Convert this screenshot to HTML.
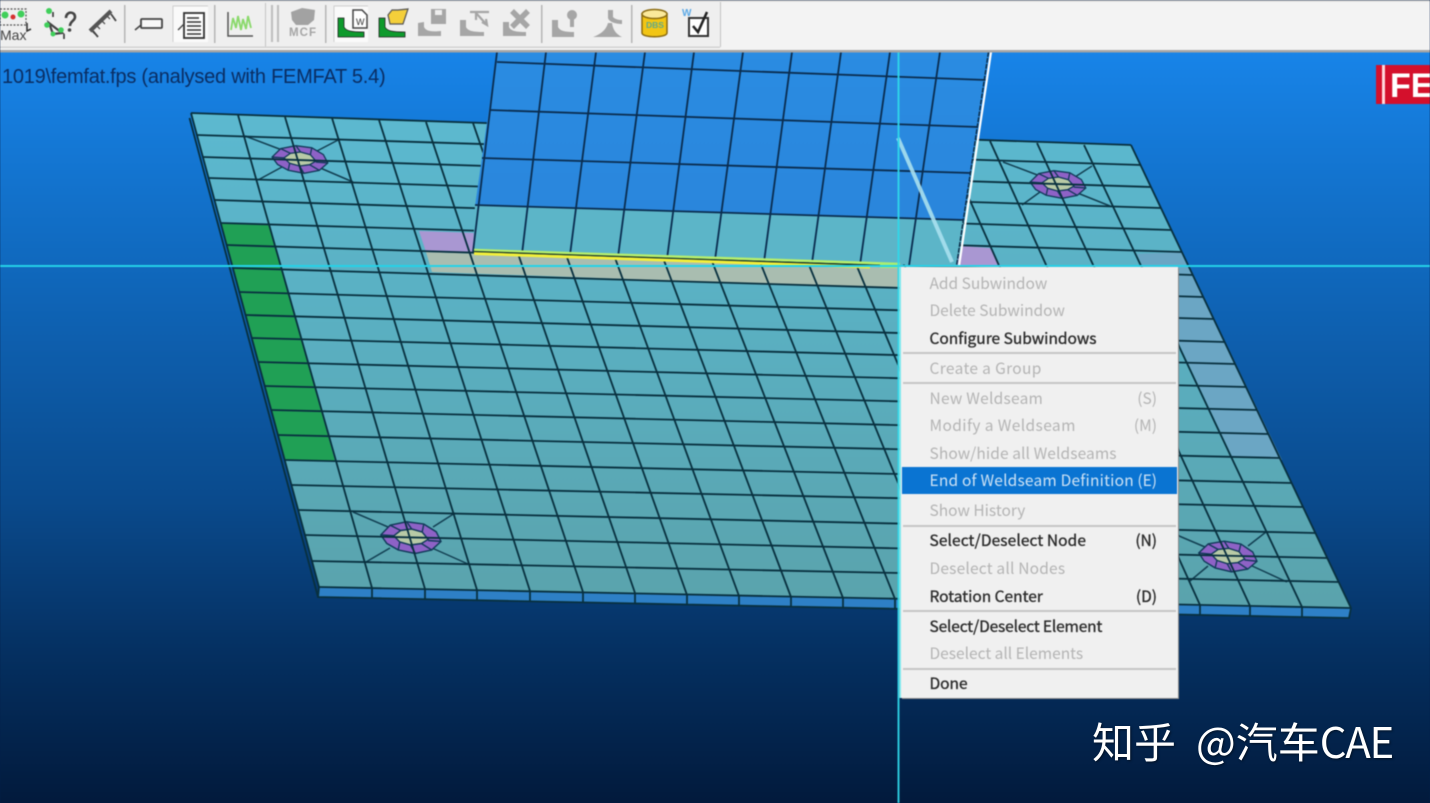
<!DOCTYPE html>
<html><head><meta charset="utf-8"><style>
html,body{margin:0;padding:0;width:1430px;height:803px;overflow:hidden;background:#03204a}
#s{position:absolute;left:0;top:0;filter:blur(.5px)}
.t{position:absolute;white-space:nowrap}
#title{left:2px;top:64px;font:20px/26px "Liberation Sans",sans-serif;color:#0a2d62;letter-spacing:-.25px;filter:blur(.4px)}
#menu{position:absolute;left:901px;top:267px;width:277px;height:431px;background:#f0f0f0;box-shadow:1px 1px 0 #8a8a8a,-2px 0 0 #7fe8ee;font:15.5px/20px "Noto Sans CJK SC","Liberation Sans",sans-serif;color:#b4b4b4;filter:blur(.4px)}
#menu .i{position:absolute;left:28.5px;white-space:nowrap}
#menu .k{position:absolute;right:21px;white-space:nowrap}
#menu .b{color:#2c2c2c;-webkit-text-stroke:.35px #2c2c2c}
#menu .hr{position:absolute;left:2px;right:2px;height:2px;background:#c6c6c6}
#hl{position:absolute;left:1px;right:1px;top:200px;height:27px;background:#0a74d2}
#menu .w{color:#cfe3f5}
.wm{position:absolute;font:42px/50px "Noto Sans CJK SC","Liberation Sans",sans-serif;color:#fff;white-space:nowrap;text-shadow:1px 1px 2px rgba(0,0,0,.5)}
</style></head><body>
<svg id="s" width="1430" height="803" viewBox="0 0 1430 803" xmlns="http://www.w3.org/2000/svg">
<defs>
<linearGradient id="bg" gradientUnits="userSpaceOnUse" x1="0" y1="52" x2="0" y2="803">
<stop offset="0" stop-color="#1884e8"/><stop offset=".28" stop-color="#1069be"/><stop offset=".6" stop-color="#0a4a8c"/><stop offset=".8" stop-color="#053061"/><stop offset="1" stop-color="#021a3c"/>
</linearGradient>
<linearGradient id="pl" gradientUnits="userSpaceOnUse" x1="0" y1="113" x2="0" y2="610">
<stop offset="0" stop-color="#5cb9d0"/><stop offset=".5" stop-color="#5aaebf"/><stop offset="1" stop-color="#5aa3ac"/>
</linearGradient>
<linearGradient id="pn" gradientUnits="userSpaceOnUse" x1="0" y1="52" x2="0" y2="222">
<stop offset="0" stop-color="#2a8ce2"/><stop offset="1" stop-color="#2a86dc"/>
</linearGradient>
<g id="bolt" stroke="#123a5a" stroke-width="1.3">
<polygon points="-28,0 -20,-9 -5,-13 11,-12 23,-6 28,2 20,10 5,14 -11,12 -22,7" fill="#8e62c6"/>
<polygon points="-16,0 -10,-5 0,-7 10,-5 16,1 10,5 0,7 -10,5" fill="#b8caa6"/>
<path d="M-28,0H-16M-20,-9L-10,-5M-5,-13L0,-7M11,-12L10,-5M28,2H16M20,10L10,5M5,14L0,7M-11,12L-10,5" fill="none"/>
</g>
</defs>
<rect width="1430" height="803" fill="url(#bg)"/>

<!-- plate -->
<polygon points="319,587 1351,608 1349,618 318,597" fill="#2e80c6"/>
<polygon points="191,113 1131,145 1351,608 319,587" fill="url(#pl)"/>
<polygon points="221,223 270,225 335,461 285,460" fill="#20a055"/>
<polygon points="419,231 475,233 473,252 426,252" fill="#a997d2"/>
<polygon points="962,246 990,248 1001,266 956,266" fill="#a997d2"/>
<polygon points="426,252 905,268 905,289 432,272" fill="#a9bdb0"/>
<polygon points="1137,254 1182,252 1282,460 1232,456" fill="#6ba6c4"/>

<!-- bolts -->
<g stroke="#123f52" stroke-width="1.5" fill="none">
<path d="M245,136L282,150M340,139L317,151M258,180L282,167M353,182L318,167"/>
<path d="M1003,162L1040,176M1092,166L1075,177M1022,205L1040,192M1110,206L1075,192"/>
<path d="M353,512L388,527M455,513L433,527M366,562L390,548M468,564L432,548"/>
<path d="M1165,530L1205,547M1266,532L1248,546M1190,581L1208,566M1287,582L1250,565"/>
</g>
<use href="#bolt" transform="translate(300,159) rotate(4)"/>
<use href="#bolt" transform="translate(1058,184) rotate(4)"/>
<use href="#bolt" transform="translate(411,537) rotate(4) scale(1.08,1.15)"/>
<use href="#bolt" transform="translate(1228,556) rotate(6) scale(1.05,1.1)"/>

<g stroke="#08303f" stroke-width="1.8" fill="none">
<path d="M191,113L1131,145M197,135L1141,165M203,157L1151,187M209,178L1161,208M215,200L1171,230M221,223L1182,252M227,245L1193,275M233,268L1203,297M239,292L1214,319M246,315L1225,342M252,338L1235,364M258,362L1246,387M265,386L1257,410M271,410L1268,434M278,435L1280,458M285,460L1292,483M292,485L1303,507M298,510L1315,533M305,535L1327,558M312,561L1339,582M319,587L1351,608"/>
<path d="M191,113L319,587M238,115L372,588M285,117L425,589M332,118L477,590M379,120L530,591M426,122L583,592M473,123L635,593M520,125L687,595M567,127L739,596M614,128L791,597M661,130L843,598M708,132L895,599M755,133L946,600M802,135L997,601M849,136L1048,602M896,138L1099,603M943,140L1150,604M990,141L1200,605M1037,143L1250,606M1084,145L1302,607M1131,145L1351,608"/>
<path d="M319,587L318,597L1349,618L1351,608M189.500,118L318,597M372,588V598M425,589V599M477,590V600M530,591V601M583,592V602M635,593V604M687,595V605M739,596V606M791,597V607M843,598V608M895,599V609M1200,605V615M1250,606V616M1302,607V617"/>
</g>

<!-- vertical panel -->
<polygon points="497,52 989,52 964,221 475,206" fill="url(#pn)"/>
<polygon points="475,205 964,220 957,266 473,252" fill="#5cb5c8"/>
<g stroke="#0a2d50" stroke-width="1.8" fill="none">
<path d="M497,62L986,80M490,110L978,127M482,158L971,173M475,205L964,220"/>
<path d="M497,52L473,252M546,52L522,254M596,52L570,255M645,52L618,257M694,52L667,259M743,52L715,260M792,52L764,262M841,52L812,263M890,52L860,265M940,52L909,266"/>
</g>
<path d="M898,138L952,262" stroke="#a8e0ee" stroke-width="4" fill="none" opacity=".9"/>
<path d="M474,250L900,264" stroke="#b7ef6c" stroke-width="2.500"/>
<path d="M474,253.500L870,267" stroke="#f3f03a" stroke-width="3"/>
<path d="M474,251.500L880,265.500" stroke="#1b3a2a" stroke-width="1.200"/>
<rect x="880" y="263" width="20" height="5" fill="#a8ee70"/>
<path d="M991,52L959,266" stroke="#ffffff" stroke-width="2.200"/>
<path d="M988.500,52L956.500,266" stroke="#0c2d48" stroke-width="1.500" stroke-dasharray="5 1"/>

<!-- crosshair -->
<rect x="0" y="265" width="1430" height="2" fill="#25d2e8"/>
<rect x="897.500" y="52" width="2" height="751" fill="#2fd8ea" opacity=".9"/>

<!-- logo -->
<rect x="1376" y="65" width="54" height="39" fill="#d4102c"/>
<rect x="1382" y="65" width="3" height="39" fill="#ffd8dc"/>
<text x="1390" y="97" font-family="Liberation Sans" font-weight="700" font-size="34" fill="#fff">FE</text>

<!-- toolbar -->
<rect x="0" y="0" width="1430" height="52" fill="#f3f3f3"/>
<rect x="0" y="0" width="720" height="47" fill="#efefef"/>
<rect x="0" y="0" width="1430" height="1.500" fill="#c8c8c8"/>
<rect x="0" y="50" width="1430" height="2.500" fill="#a5a5a5"/>
<rect x="265" y="3" width="1" height="44" fill="#c4c4c4"/>
<rect x="720" y="2" width="1" height="45" fill="#c4c4c4"/>
<rect x="0" y="46.500" width="720" height="1.500" fill="#d2d2d2"/>
<g fill="#b5b5b5"><rect x="124" y="5" width="1.500" height="38"/><rect x="214" y="5" width="1.500" height="38"/><rect x="325" y="5" width="1.500" height="38"/><rect x="541" y="5" width="1.500" height="38"/><rect x="631" y="5" width="1.500" height="38"/></g>
<path d="M272,5V42M278,5V42" stroke="#bdbdbd" stroke-width="2" fill="none"/>

<!-- max -->
<rect x="0" y="9" width="26" height="16" fill="none" stroke="#555" stroke-width="1.200" stroke-dasharray="2 1.500"/>
<circle cx="5" cy="15" r="3.500" fill="#3fcf5a"/><circle cx="21" cy="14" r="3.500" fill="#3fcf5a"/><circle cx="13" cy="17" r="2.500" fill="#d63030"/>
<path d="M27,23V31L31,29" stroke="#333" stroke-width="1.600" fill="none"/>
<text x="0" y="40" font-family="Liberation Sans" font-size="14" fill="#444">Max</text>
<!-- points ? -->
<circle cx="49" cy="11" r="3" fill="#3fcf5a"/><path d="M53,12v5" stroke="#333" stroke-width="1.600"/>
<path d="M49,23L62,33L53,34Z" fill="none" stroke="#444" stroke-width="2.200"/>
<circle cx="47" cy="25" r="2.800" fill="#3fcf5a"/><circle cx="61" cy="30" r="2.800" fill="#3fcf5a"/><circle cx="53" cy="34" r="2.500" fill="#3fcf5a"/>
<path d="M66,18c0-7 9-7 9-1c0,4-5,4-5,9" fill="none" stroke="#444" stroke-width="2.600"/><circle cx="69.500" cy="30" r="1.800" fill="#444"/>
<path d="M64,34v5" stroke="#333" stroke-width="1.600"/>
<!-- ruler -->
<path d="M90,31L111,11" stroke="#555" stroke-width="4"/>
<path d="M95,34L92,31M100,29L97,26M105,24L102,21M110,19L107,16" stroke="#555" stroke-width="1.300"/>
<path d="M111,14L116,21M93,31L98,37" stroke="#444" stroke-width="1.800"/>
<!-- note -->
<rect x="141" y="19" width="21" height="9" rx="1" fill="#f8f8f8" stroke="#444" stroke-width="1.800"/>
<path d="M135,30L141,25" stroke="#444" stroke-width="1.500"/>
<!-- doc button -->
<rect x="173" y="6" width="35" height="36" fill="#fafafa"/>
<path d="M173,42V6H208" stroke="#cfcfcf" stroke-width="1" fill="none"/>
<rect x="184" y="13" width="20" height="25" fill="#fff" stroke="#333" stroke-width="1.800"/>
<path d="M187,18H199M187,22H201M187,26H201M187,30H201M187,34H201" stroke="#333" stroke-width="1.500"/>
<path d="M178,30L184,24" stroke="#444" stroke-width="1.300"/>
<!-- chart -->
<path d="M228,12V36H253" stroke="#555" stroke-width="1.500" fill="none"/>
<path d="M231,30L233,18L236,28L238,16L241,30L243,19L246,29L248,16L251,28" stroke="#8ad96b" stroke-width="1.800" fill="none"/>
<!-- MCF -->
<path d="M291,12L302,8L315,10L314,20L308,25H296L292,20Z" fill="#a2a2a2"/>
<text x="289" y="36" font-family="Liberation Sans" font-weight="700" font-size="11.500" fill="#a5a5a5" textLength="27">MCF</text>
<!-- pressed L -->
<rect x="334" y="6" width="34" height="36" fill="#fafafa"/>
<path d="M334,42V6H368" stroke="#cfcfcf" stroke-width="1" fill="none"/>
<path d="M338,18H344V27C346,31 351,32 364,32V37H338Z" fill="#0e9a2c" stroke="#222" stroke-width=".8"/>
<path d="M353,10H362L367,15V28H353Z" fill="#fff" stroke="#444" stroke-width="1.500"/>
<text x="356" y="25" font-family="Liberation Sans" font-size="9" fill="#333">W</text>
<!-- folder L -->
<path d="M379,18H385V27C387,31 392,32 405,32V37H379Z" fill="#0e9a2c" stroke="#222" stroke-width=".8"/>
<path d="M388,15L392,10H398L408,9L403,24H390Z" fill="#f4cf3a" stroke="#555" stroke-width="1.200"/>
<!-- grey -->
<g fill="#a6a6a6">
<path d="M418,23L424,22V27C426,31 431,32 441,31V36H418Z"/>
<path d="M431,9H446V24H431Z"/><rect x="435" y="10" width="7" height="5" fill="#eee"/>
<path d="M460,20H466V27C468,31 473,32 484,32V36H460Z"/>
<path d="M503,22H509V27C511,31 516,32 526,32V36H503Z"/>
<path d="M552,20H558V27C560,31 565,32 574,32V37H552Z"/>
<circle cx="572" cy="15" r="5"/><rect x="570" y="17" width="4" height="10"/>
<path d="M593,37C601,34 606,30 608,23H612C613,30 616,34 622,37Z"/>
<path d="M608,10H613V17C615,19 618,20 622,20V24C616,24 609,22 608,18Z"/>
</g>
<path d="M470,12H489M476,12V20M476,13L487,25M482,22L487,25L486,19" stroke="#a6a6a6" stroke-width="2.200" fill="none"/>
<path d="M512,11L528,27M528,11L512,27" stroke="#a6a6a6" stroke-width="5.500"/>
<!-- dbs -->
<path d="M642,14V33C642,38 667,38 667,33V14Z" fill="#f2c514" stroke="#8a6a10" stroke-width="1.500"/>
<ellipse cx="654.500" cy="14" rx="12.500" ry="4.500" fill="#fbe99a" stroke="#8a6a10" stroke-width="1.500"/>
<text x="646" y="28" font-family="Liberation Sans" font-weight="700" font-size="8.500" fill="#5fa98a">DBS</text>
<!-- check -->
<text x="682" y="16" font-family="Liberation Sans" font-weight="700" font-size="10" fill="#5aa8e6">W</text>
<rect x="689" y="18" width="19" height="18" fill="#fff" stroke="#333" stroke-width="2"/>
<path d="M693,26L698,32L707,12" fill="none" stroke="#222" stroke-width="2.500"/>
</svg>

<div class="t" id="title">1019\femfat.fps (analysed with FEMFAT 5.4)</div>

<div id="menu">
<div class="i" style="top:6px">Add Subwindow</div>
<div class="i" style="top:33px">Delete Subwindow</div>
<div class="i b" style="top:61px">Configure Subwindows</div>
<div class="hr" style="top:85px"></div>
<div class="i" style="top:91px;letter-spacing:.35px">Create a Group</div>
<div class="hr" style="top:115px"></div>
<div class="i" style="top:121px;letter-spacing:.25px">New Weldseam</div><div class="k" style="top:121px">(S)</div>
<div class="i" style="top:148px;letter-spacing:.4px">Modify a Weldseam</div><div class="k" style="top:148px">(M)</div>
<div class="i" style="top:176px;letter-spacing:.1px">Show/hide all Weldseams</div>
<div id="hl"></div>
<div class="i w" style="top:203px;letter-spacing:.2px">End of Weldseam Definition</div><div class="k w" style="top:203px">(E)</div>
<div class="i" style="top:233px">Show History</div>
<div class="hr" style="top:258px"></div>
<div class="i b" style="top:263px;letter-spacing:.1px">Select/Deselect Node</div><div class="k b" style="top:263px">(N)</div>
<div class="i" style="top:291px;letter-spacing:.2px">Deselect all Nodes</div>
<div class="i b" style="top:319px">Rotation Center</div><div class="k b" style="top:319px">(D)</div>
<div class="hr" style="top:343px"></div>
<div class="i b" style="top:349px;letter-spacing:-.15px">Select/Deselect Element</div>
<div class="i" style="top:376px">Deselect all Elements</div>
<div class="hr" style="top:401px"></div>
<div class="i b" style="top:406px">Done</div>
</div>

<div class="wm" style="left:1092px;top:716px">知乎</div>
<div class="wm" style="left:1196px;top:716px">@汽车<span style="letter-spacing:-1.300px">CAE</span></div>
</body></html>
